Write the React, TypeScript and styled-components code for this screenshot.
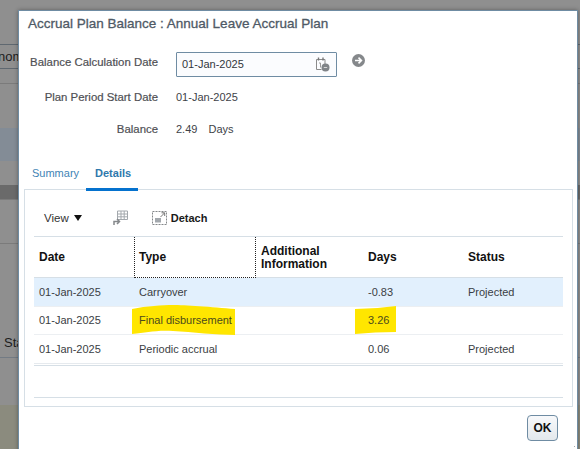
import React from 'react';
import styled, { createGlobalStyle } from 'styled-components';

const GlobalStyle = createGlobalStyle`
  html, body {
    margin: 0;
    padding: 0;
    width: 580px;
    height: 449px;
    overflow: hidden;
    background: #8f8f8f;
    font-family: "Liberation Sans", Arial, sans-serif;
  }
`;

const Page = styled.div`
  position: relative;
  width: 580px;
  height: 449px;
  overflow: hidden;
  display: flex;
  flex-direction: column;
  background: #8f8f8f;
`;

const BackBand = styled.div<{ $h: number; $bg?: string; $line?: string }>`
  height: ${({ $h }) => $h}px;
  flex: none;
  box-sizing: border-box;
  background: ${({ $bg }) => $bg || 'transparent'};
  border-bottom: 1px solid ${({ $line }) => $line || 'transparent'};
  font-size: 13px;
  color: #1c1c1c;
  display: flex;
  align-items: center;
  overflow: hidden;
`;

const BackText = styled.span<{ $shift: number }>`
  margin-left: ${({ $shift }) => $shift}px;
  white-space: nowrap;
`;

const Dialog = styled.section`
  position: absolute;
  left: 18px;
  top: 10px;
  width: 560px;
  height: 450px;
  box-sizing: border-box;
  background: #fff;
  border: 1px solid #6f8ca3;
  box-shadow: 0 0 4px rgba(0, 0, 0, 0.35);
  display: flex;
  flex-direction: column;
`;

const Title = styled.h1`
  margin: 0;
  padding: 4px 0 0 9px;
  height: 28px;
  box-sizing: border-box;
  font-size: 13.5px;
  line-height: 17px;
  font-weight: 400;
  -webkit-text-stroke: 0.3px #4f5a66;
  color: #4f5a66;
  white-space: nowrap;
`;

const Form = styled.div`
  display: flex;
  flex-direction: column;
  margin-top: 13px;
`;

const FormRow = styled.div<{ $h: number }>`
  display: flex;
  align-items: center;
  height: ${({ $h }) => $h}px;
`;

const Label = styled.div<{ $raised?: boolean }>`
  width: 139px;
  margin-top: ${({ $raised }) => ($raised ? -6 : 0)}px;
  text-align: right;
  font-size: 11.4px;
  color: #4f5054;
  -webkit-text-stroke: 0.2px #4f5054;
  white-space: nowrap;
`;

const Value = styled.div`
  margin-left: 18px;
  font-size: 11px;
  color: #3e4248;
  word-spacing: 8px;
`;

const DateInput = styled.div`
  margin-left: 18px;
  width: 161px;
  height: 25px;
  box-sizing: border-box;
  border: 1px solid #6f8ca3;
  border-radius: 1px;
  background: #fbfcfe;
  padding: 0 6px 0 5px;
  display: flex;
  align-items: center;
  justify-content: space-between;
  font-size: 11px;
  color: #33373c;
`;

const DateText = styled.span`
  margin-top: -2px;
`;

const GoButton = styled.svg`
  margin: -8px 0 0 15px;
  width: 13px;
  height: 13px;
  flex: none;
`;

const Tabs = styled.div`
  display: flex;
  margin: 16px 0 0 5px;
  height: 37px;
  position: relative;
  z-index: 1;
`;

const Tab = styled.div<{ $active?: boolean }>`
  box-sizing: border-box;
  height: 34px;
  padding: 0 ${({ $active }) => ($active ? 7 : 8)}px 0 ${({ $active }) => ($active ? 9 : 8)}px;
  margin-left: ${({ $active }) => ($active ? -1 : 0)}px;
  font-size: 11px;
  font-weight: ${({ $active }) => ($active ? 700 : 400)};
  color: ${({ $active }) => ($active ? '#2e78ac' : '#3f84b5')};
  display: flex;
  align-items: center;
  border-bottom: 3px solid ${({ $active }) => ($active ? '#0572ce' : 'transparent')};
`;

const Panel = styled.div`
  margin: -5px 0 0 5px;
  width: 549px;
  height: 218px;
  box-sizing: border-box;
  border: 1px solid #d6dfe6;
  padding: 0 9px;
  display: flex;
  flex-direction: column;
`;

const Toolbar = styled.div`
  height: 47px;
  flex: none;
  box-sizing: border-box;
  display: flex;
  align-items: center;
  padding: 9px 0 0 10px;
  border-bottom: 1px solid #d6dfe6;
`;

const ViewMenu = styled.div`
  font-size: 11.5px;
  color: #333;
  display: flex;
  align-items: center;
  gap: 5px;
`;

const Caret = styled.span`
  width: 0;
  height: 0;
  border-left: 4px solid transparent;
  border-right: 4px solid transparent;
  border-top: 6px solid #111;
`;

const ToolIcon = styled.svg<{ $gap: number }>`
  margin-left: ${({ $gap }) => $gap}px;
  width: 15px;
  height: 16px;
  flex: none;
`;

const DetachText = styled.span`
  margin-left: 4px;
  font-size: 11px;
  font-weight: 700;
  color: #1a1a1a;
`;

const Grid = styled.table`
  width: 529px;
  border-collapse: separate;
  border-spacing: 0;
  table-layout: fixed;
`;

const HeadCell = styled.th<{ $w: number; $focus?: boolean; $lines?: boolean }>`
  width: ${({ $w }) => $w}px;
  height: 41px;
  box-sizing: border-box;
  padding: ${({ $lines }) => ($lines ? 2 : 0)}px 0 0 ${({ $focus }) => ($focus ? 4 : 5)}px;
  text-align: left;
  vertical-align: middle;
  font-size: 12px;
  line-height: 13px;
  font-weight: 700;
  color: #111;
  border-bottom: 1px ${({ $focus }) => ($focus ? 'dotted #222' : 'solid #d6dfe6')};
  border-left: ${({ $focus }) => ($focus ? '1px dotted #222' : 'none')};
  border-right: ${({ $focus }) => ($focus ? '1px dotted #222' : 'none')};
`;

const Row = styled.tr<{ $selected?: boolean; $h: number }>`
  height: ${({ $h }) => $h}px;
  background: ${({ $selected }) => ($selected ? '#e2f0fd' : 'transparent')};
`;

const Cell = styled.td<{ $end?: boolean; $mark?: boolean }>`
  padding: 0 0 ${({ $mark }) => ($mark ? 2 : 0)}px 5px;
  font-size: 11px;
  color: #3a3e44;
  white-space: nowrap;
  border-bottom: 1px solid ${({ $end }) => ($end ? '#e6eaee' : '#eceff2')};
`;

const Marked = styled.span`
  position: relative;
  display: inline-block;
`;

const Ink = styled.svg<{ $l: number; $t: number; $w: number; $h: number }>`
  position: absolute;
  left: ${({ $l }) => $l}px;
  top: ${({ $t }) => $t}px;
  width: ${({ $w }) => $w}px;
  height: ${({ $h }) => $h}px;
`;

const MarkedText = styled.span`
  position: relative;
  color: #4b4a1c;
`;

const TableFoot = styled.div`
  flex: none;
  height: 33px;
  margin-top: 1px;
  width: 529px;
  box-sizing: border-box;
  border-top: 1px solid #d6dfe6;
  border-bottom: 1px solid #d6dfe6;
`;

const Footer = styled.div`
  display: flex;
  justify-content: flex-end;
  padding: 8px 19px 0 0;
`;

const OkButton = styled.button`
  width: 31px;
  height: 26px;
  box-sizing: border-box;
  padding: 0;
  border: 1px solid #6f8ca3;
  border-radius: 4px;
  background: linear-gradient(#f8f9fb, #e3e8ec);
  font-family: inherit;
  font-size: 12px;
  font-weight: 700;
  color: #111;
`;

const Grip = styled.svg`
  position: absolute;
  right: 1px;
  bottom: 5px;
  width: 9px;
  height: 9px;
`;

const rows = [
  { date: '01-Jan-2025', type: 'Carryover', days: '-0.83', status: 'Projected', selected: true, h: 29 },
  { date: '01-Jan-2025', type: 'Final disbursement', days: '3.26', status: '', mark: true, h: 28 },
  { date: '01-Jan-2025', type: 'Periodic accrual', days: '0.06', status: 'Projected', end: true, h: 29 },
];

const CalendarIcon = () => (
  <svg width="15" height="15" viewBox="0 0 15 15">
    <path d="M1.5 2.5h8.5v5M1.5 2.5v10h5" fill="none" stroke="#8b8b8b" strokeWidth="1" />
    <path d="M3.5 .5v3M8 .5v3" stroke="#777" strokeWidth="1.4" />
    <path d="M4 6h1.5v4.5" fill="none" stroke="#9a9a9a" strokeWidth="1" />
    <circle cx="10.5" cy="10.5" r="4" fill="#808488" />
    <path d="M8.8 10.5h3.400" stroke="#d5d5d5" strokeWidth="1" />
  </svg>
);

const App: React.FC = () => (
  <>
    <GlobalStyle />
    <Page>
      <BackBand $h={45} $line="#5f6870" />
      <BackBand $h={24} $line="#5f6870">
        <BackText $shift={-2}>nom</BackText>
      </BackBand>
      <BackBand $h={15} $line="#7b7b7b" />
      <BackBand $h={44} />
      <BackBand $h={33} $bg="#838c96" />
      <BackBand $h={24} />
      <BackBand $h={15} $bg="#6a6a6a" $line="#7b7b7b" />
      <BackBand $h={44} $line="#7b7b7b" />
      <BackBand $h={92} />
      <BackBand $h={14}>
        <BackText $shift={4}>Sta</BackText>
      </BackBand>
      <BackBand $h={8} $line="#737b84" />
      <BackBand $h={47} />
      <BackBand $h={44} $bg="#8b8b7e" />

      <Dialog>
        <Title>Accrual Plan Balance : Annual Leave Accrual Plan</Title>
        <Form>
          <FormRow $h={25}>
            <Label $raised>Balance Calculation Date</Label>
            <DateInput>
              <DateText>01-Jan-2025</DateText>
              <CalendarIcon />
            </DateInput>
            <GoButton viewBox="0 0 13 13">
              <circle cx="6.5" cy="6.5" r="6.5" fill="#85888b" />
              <path d="M3 6.5h6M6.5 3.7l2.9 2.8-2.9 2.8" fill="none" stroke="#fff" strokeWidth="1.6" />
            </GoButton>
          </FormRow>
          <FormRow $h={40}>
            <Label>Plan Period Start Date</Label>
            <Value>01-Jan-2025</Value>
          </FormRow>
          <FormRow $h={24}>
            <Label>Balance</Label>
            <Value>2.49 Days</Value>
          </FormRow>
        </Form>
        <Tabs>
          <Tab>Summary</Tab>
          <Tab $active>Details</Tab>
        </Tabs>
        <Panel>
          <Toolbar>
            <ViewMenu>
              View
              <Caret />
            </ViewMenu>
            <ToolIcon $gap={31} viewBox="0 0 15 16">
              <path d="M4.5 1h10v8.5h-10zM4.5 4h10M4.5 6.800h10M8 1v8.5M11.2 1v8.5" fill="none" stroke="#a3a8ad" strokeWidth="1" />
              <path d="M1 15v-3.500h5M4 9l2.500 2.500L4 14" fill="none" stroke="#85888b" strokeWidth="1.5" />
            </ToolIcon>
            <ToolIcon $gap={24} viewBox="0 0 15 16">
              <rect x=".5" y="1.5" width="14" height="13" fill="none" stroke="#85888b" strokeDasharray="2 1" />
              <rect x="3" y="8" width="6" height="4.5" fill="#a3a8ad" />
              <path d="M8.5 7l4-4M9.5 2.800h3.200v3.200" fill="none" stroke="#777" strokeWidth="1" />
            </ToolIcon>
            <DetachText>Detach</DetachText>
          </Toolbar>
          <Grid>
            <thead>
              <tr>
                <HeadCell $w={100}>Date</HeadCell>
                <HeadCell $w={122} $focus>Type</HeadCell>
                <HeadCell $w={107} $lines>Additional Information</HeadCell>
                <HeadCell $w={100}>Days</HeadCell>
                <HeadCell $w={100}>Status</HeadCell>
              </tr>
            </thead>
            <tbody>
              {rows.map((r) => (
                <Row key={r.type} $selected={r.selected} $h={r.h}>
                  <Cell $end={r.end} $mark={r.mark}>{r.date}</Cell>
                  <Cell $end={r.end} $mark={r.mark}>
                    {r.mark ? (
                      <Marked>
                        <Ink $l={-7} $t={-9} $w={103} $h={30} viewBox="0 0 103 30">
                          <path d="M0 4C15 1 30 0 41 0S80 2 103 4V30C85 30 60 27 41 26S15 28 0 29Z" fill="#ffe600" />
                        </Ink>
                        <MarkedText>{r.type}</MarkedText>
                      </Marked>
                    ) : (
                      r.type
                    )}
                  </Cell>
                  <Cell $end={r.end} $mark={r.mark} />
                  <Cell $end={r.end} $mark={r.mark}>
                    {r.mark ? (
                      <Marked>
                        <Ink $l={-13} $t={-8} $w={41} $h={28} viewBox="0 0 41 28">
                          <path d="M0 3Q20 3 41 0V26Q20 26 0 28Z" fill="#ffe600" />
                        </Ink>
                        <MarkedText>{r.days}</MarkedText>
                      </Marked>
                    ) : (
                      r.days
                    )}
                  </Cell>
                  <Cell $end={r.end} $mark={r.mark}>{r.status}</Cell>
                </Row>
              ))}
            </tbody>
          </Grid>
          <TableFoot />
        </Panel>
        <Footer>
          <OkButton>OK</OkButton>
        </Footer>
        <Grip viewBox="0 0 9 9">
          <path d="M7.5 1v1M7.5 4v1M7.5 7v1M4.5 4v1M4.5 7v1M1.5 7v1" stroke="#a9a9a9" strokeWidth="1" />
        </Grip>
      </Dialog>
    </Page>
  </>
);

export default App;
